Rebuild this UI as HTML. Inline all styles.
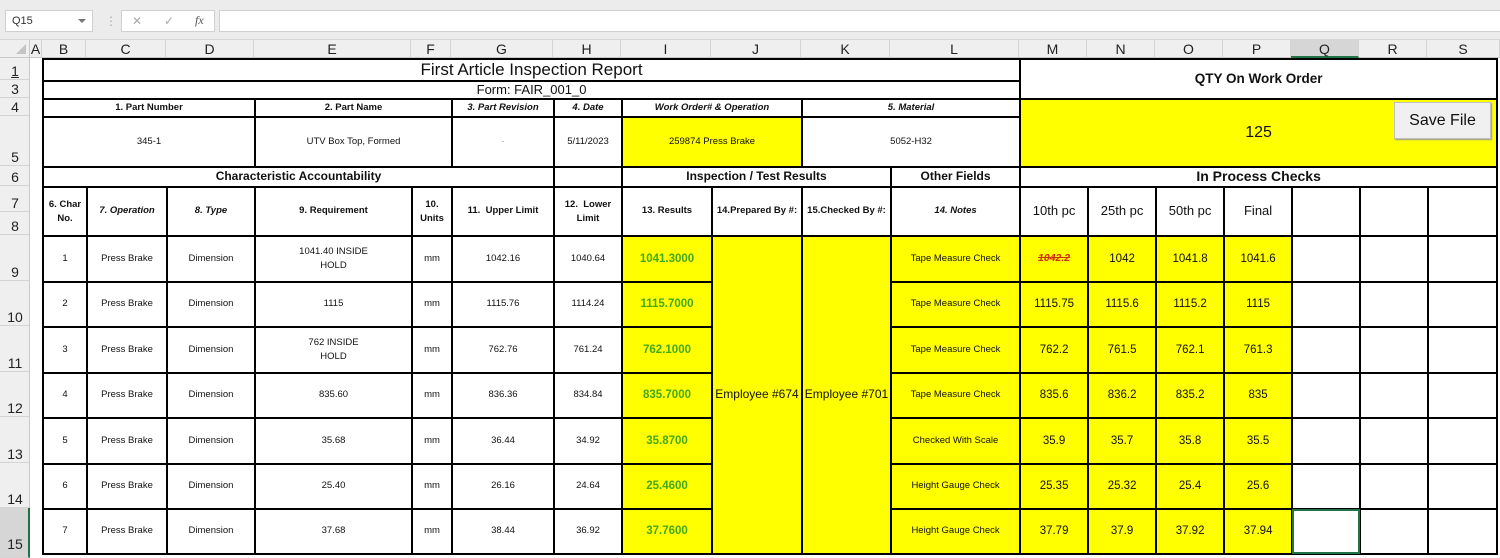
<!DOCTYPE html>
<html><head><meta charset="utf-8">
<style>
*{box-sizing:border-box;margin:0;padding:0}
body{width:1500px;height:558px;overflow:hidden;background:#fff;font-family:"Liberation Sans",Arial,sans-serif;position:relative;color:#111}
.top{position:absolute;left:0;top:0;width:1500px;height:40px;background:#ececec;border-bottom:1px solid #d6d6d6}
.nb{position:absolute;left:5px;top:10px;width:88px;height:22px;background:#fff;border:1px solid #d0d0d0;font-size:11px;padding:4px 6px;color:#333}
.nb:after{content:"";position:absolute;right:6px;top:8px;border:4px solid transparent;border-top:4px solid #777}
.fx{position:absolute;left:121px;top:10px;width:94px;height:22px;background:#fff;border:1px solid #d0d0d0;font-size:12px;color:#aaa}
.fi{position:absolute;left:219px;top:10px;width:1290px;height:22px;background:#fff;border:1px solid #d0d0d0}
.colh{position:absolute;top:40px;height:18px;background:#efefef;border-right:1px solid #d4d4d4;border-bottom:1px solid #c8c8c8;font-size:14px;text-align:center;line-height:18px;color:#222}
.rowh{position:absolute;left:0;width:30px;background:#efefef;border-bottom:1px solid #d4d4d4;border-right:1px solid #c8c8c8;font-size:14px;text-align:center;color:#222}
.rowh span{position:absolute;bottom:0;left:0;width:30px;line-height:16px}
table{position:absolute;left:42px;top:58px;border-collapse:collapse;table-layout:fixed;width:1454px}
td{border:2px solid #000;text-align:center;vertical-align:middle;font-size:9.5px;line-height:1.1;padding:0;overflow:hidden}
.lh{line-height:1.45}
.h{font-weight:bold;font-size:9.5px}
.i{font-style:italic}
.y{background:#ffff00}
.g{color:#44a81c;font-weight:bold;font-size:11.5px}
.b{font-size:13px}
.n{font-size:11.5px}
.sec{font-weight:bold;font-size:12px}
.btn{position:absolute;left:1394px;top:102px;width:97px;height:37px;background:#f0f0f0;border:1px solid #c0c0c0;box-shadow:1px 1px 1px #999;font-size:16px;line-height:36px;text-align:center;color:#111}
</style></head><body>
<div class="top">
<div class="nb">Q15</div>
<div style="position:absolute;left:105px;top:14px;color:#aaa;font-size:12px">⋮</div>
<div class="fx"><span style="position:absolute;left:10px;top:3px">✕</span><span style="position:absolute;left:42px;top:3px">✓</span><span style="position:absolute;left:73px;top:2px;color:#555;font-style:italic;font-family:'Liberation Serif',serif">fx</span></div>
<div class="fi"></div>
</div>
<div style="position:absolute;left:0;top:40px;width:30px;height:18px;background:#efefef;border-right:1px solid #c8c8c8;border-bottom:1px solid #c8c8c8"><div style="position:absolute;right:3px;bottom:3px;border-left:10px solid transparent;border-bottom:10px solid #c4c4c4"></div></div>
<div class="colh" style="left:30px;width:12px">A</div>
<div class="colh" style="left:42px;width:44px">B</div>
<div class="colh" style="left:86px;width:80px">C</div>
<div class="colh" style="left:166px;width:88px">D</div>
<div class="colh" style="left:254px;width:157px">E</div>
<div class="colh" style="left:411px;width:40px">F</div>
<div class="colh" style="left:451px;width:102px">G</div>
<div class="colh" style="left:553px;width:68px">H</div>
<div class="colh" style="left:621px;width:90px">I</div>
<div class="colh" style="left:711px;width:90px">J</div>
<div class="colh" style="left:801px;width:89px">K</div>
<div class="colh" style="left:890px;width:129px">L</div>
<div class="colh" style="left:1019px;width:68px">M</div>
<div class="colh" style="left:1087px;width:68px">N</div>
<div class="colh" style="left:1155px;width:68px">O</div>
<div class="colh" style="left:1223px;width:68px">P</div>
<div class="colh" style="left:1291px;width:68px;background:#d6d6d6;border-bottom:2px solid #217346">Q</div>
<div class="colh" style="left:1359px;width:68px">R</div>
<div class="colh" style="left:1427px;width:73px">S</div>
<div class="rowh" style="top:58px;height:22px"><span style="text-decoration:underline">1</span></div>
<div class="rowh" style="top:80px;height:18px"><span>3</span></div>
<div class="rowh" style="top:98px;height:18px"><span>4</span></div>
<div class="rowh" style="top:116px;height:50px"><span>5</span></div>
<div class="rowh" style="top:166px;height:20px"><span>6</span></div>
<div class="rowh" style="top:186px;height:26px"><span>7</span></div>
<div class="rowh" style="top:212px;height:23px"><span>8</span></div>
<div class="rowh" style="top:235px;height:46px"><span>9</span></div>
<div class="rowh" style="top:281px;height:45px"><span>10</span></div>
<div class="rowh" style="top:326px;height:46px"><span>11</span></div>
<div class="rowh" style="top:372px;height:45px"><span>12</span></div>
<div class="rowh" style="top:417px;height:46px"><span>13</span></div>
<div class="rowh" style="top:463px;height:45px"><span>14</span></div>
<div class="rowh" style="top:508px;height:50px;background:#d6d6d6;border-right:2px solid #217346"><span style="bottom:5px">15</span></div>
<table>
<colgroup><col style="width:44px"><col style="width:80px"><col style="width:88px"><col style="width:157px"><col style="width:40px"><col style="width:102px"><col style="width:68px"><col style="width:90px"><col style="width:90px"><col style="width:89px"><col style="width:129px"><col style="width:68px"><col style="width:68px"><col style="width:68px"><col style="width:68px"><col style="width:68px"><col style="width:68px"><col style="width:69px"></colgroup>
<tr style="height:22px"><td colspan="11" style="font-size:17px">First Article Inspection Report</td><td colspan="7" rowspan="2" class="sec" style="font-size:13.5px">QTY On Work Order</td></tr>
<tr style="height:18px"><td colspan="11" style="font-size:13px">Form: FAIR_001_0</td></tr>
<tr style="height:18px"><td colspan="3" class="h">1. Part Number</td><td colspan="2" class="h">2. Part Name</td><td class="h i">3. Part Revision</td><td class="h i">4. Date</td><td colspan="2" class="h i">Work Order# &amp; Operation</td><td colspan="2" class="h i">5. Material</td><td colspan="7" rowspan="2" class="y" style="font-size:16px;padding-top:0px">125</td></tr>
<tr style="height:50px"><td colspan="3">345-1</td><td colspan="2">UTV Box Top, Formed</td><td style="color:#aaa">-</td><td>5/11/2023</td><td colspan="2" class="y">259874 Press Brake</td><td colspan="2">5052-H32</td></tr>
<tr style="height:20px"><td colspan="6" class="sec">Characteristic Accountability</td><td></td><td colspan="3" class="sec">Inspection / Test Results</td><td class="sec">Other Fields</td><td colspan="7" class="sec" style="font-size:14px">In Process Checks</td></tr>
<tr style="height:26px"><td rowspan="2" class="h lh">6. Char No.</td><td rowspan="2" class="h i">7. Operation</td><td rowspan="2" class="h i">8. Type</td><td rowspan="2" class="h">9. Requirement</td><td rowspan="2" class="h lh">10. Units</td><td rowspan="2" class="h">11.&nbsp; Upper Limit</td><td rowspan="2" class="h lh">12.&nbsp; Lower Limit</td><td rowspan="2" class="h">13. Results</td><td rowspan="2" class="h">14.Prepared By #:</td><td rowspan="2" class="h">15.Checked By #:</td><td rowspan="2" class="h i">14. Notes</td><td rowspan="2" class="b">10th pc</td><td rowspan="2" class="b">25th pc</td><td rowspan="2" class="b">50th pc</td><td rowspan="2" class="b">Final</td><td rowspan="2"></td><td rowspan="2"></td><td rowspan="2"></td></tr>
<tr style="height:23px"></tr>
<tr style="height:46px"><td>1</td><td>Press Brake</td><td>Dimension</td><td class="lh">1041.40 INSIDE<br>HOLD</td><td>mm</td><td>1042.16</td><td>1040.64</td><td class="y g">1041.3000</td><td rowspan="7" class="y" style="font-size:12px">Employee #674</td><td rowspan="7" class="y" style="font-size:12px">Employee #701</td><td class="y">Tape Measure Check</td><td class="y" style="font-size:10.5px;color:#d03010;font-style:italic;font-weight:bold;text-decoration:line-through">1042.2</td><td class="y n">1042</td><td class="y n">1041.8</td><td class="y n">1041.6</td><td></td><td></td><td></td></tr>
<tr style="height:45px"><td>2</td><td>Press Brake</td><td>Dimension</td><td>1115</td><td>mm</td><td>1115.76</td><td>1114.24</td><td class="y g">1115.7000</td><td class="y">Tape Measure Check</td><td class="y n">1115.75</td><td class="y n">1115.6</td><td class="y n">1115.2</td><td class="y n">1115</td><td></td><td></td><td></td></tr>
<tr style="height:46px"><td>3</td><td>Press Brake</td><td>Dimension</td><td class="lh">762 INSIDE<br>HOLD</td><td>mm</td><td>762.76</td><td>761.24</td><td class="y g">762.1000</td><td class="y">Tape Measure Check</td><td class="y n">762.2</td><td class="y n">761.5</td><td class="y n">762.1</td><td class="y n">761.3</td><td></td><td></td><td></td></tr>
<tr style="height:45px"><td>4</td><td>Press Brake</td><td>Dimension</td><td>835.60</td><td>mm</td><td>836.36</td><td>834.84</td><td class="y g">835.7000</td><td class="y">Tape Measure Check</td><td class="y n">835.6</td><td class="y n">836.2</td><td class="y n">835.2</td><td class="y n">835</td><td></td><td></td><td></td></tr>
<tr style="height:46px"><td>5</td><td>Press Brake</td><td>Dimension</td><td>35.68</td><td>mm</td><td>36.44</td><td>34.92</td><td class="y g">35.8700</td><td class="y">Checked With Scale</td><td class="y n">35.9</td><td class="y n">35.7</td><td class="y n">35.8</td><td class="y n">35.5</td><td></td><td></td><td></td></tr>
<tr style="height:45px"><td>6</td><td>Press Brake</td><td>Dimension</td><td>25.40</td><td>mm</td><td>26.16</td><td>24.64</td><td class="y g">25.4600</td><td class="y">Height Gauge Check</td><td class="y n">25.35</td><td class="y n">25.32</td><td class="y n">25.4</td><td class="y n">25.6</td><td></td><td></td><td></td></tr>
<tr style="height:45px"><td>7</td><td>Press Brake</td><td>Dimension</td><td>37.68</td><td>mm</td><td>38.44</td><td>36.92</td><td class="y g">37.7600</td><td class="y">Height Gauge Check</td><td class="y n">37.79</td><td class="y n">37.9</td><td class="y n">37.92</td><td class="y n">37.94</td><td style="outline:2px solid #217346;outline-offset:-2px"></td><td></td><td></td></tr>
</table>
<div class="btn">Save File</div>
</body></html>
